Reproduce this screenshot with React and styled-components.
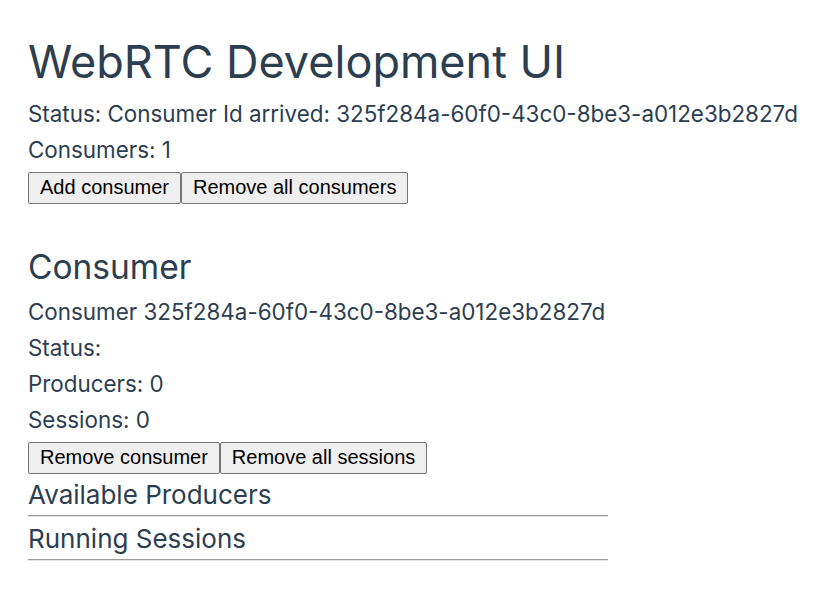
import React from 'react';
import styled, { createGlobalStyle } from 'styled-components';

const GlobalStyle = createGlobalStyle`
    body {
        margin: 0;
        background: #ffffff;
        font-family: Inter, "Noto Sans", sans-serif;
        color: #2c3e50;
    }
`;

const Page = styled.div`
    display: flex;
    flex-direction: column;
    padding: 28px 28px 0 28px;
`;

const Title = styled.h1`
    margin: 0;
    font-size: 45px;
    font-weight: 400;
    line-height: 68px;
`;

const Line = styled.p`
    margin: 0;
    font-size: 22.4px;
    line-height: 36px;
`;

const ButtonRow = styled.div`
    display: flex;
    margin-top: 4px;
`;

const Button = styled.button`
    font-family: "Liberation Sans", Arial, sans-serif;
    font-size: 20px;
    color: #000;
    background: #efefef;
    border: 1px solid #767676;
    border-radius: 2px;
    padding: 0 11px 1px;
    height: 32px;
`;

const Section = styled.section`
    display: flex;
    flex-direction: column;
    margin-top: 36px;
    width: 580px;
`;

const SectionTitle = styled.h2`
    margin: 0;
    font-size: 33.5px;
    font-weight: 400;
    line-height: 54px;
`;

const Panel = styled.div`
    border-bottom: 1px solid #9a9a9a;
    box-shadow: 0 1px 0 #e4e4e4;
    margin-bottom: 2px;
`;

const PanelTitle = styled.h3`
    margin: 0;
    font-size: 26px;
    font-weight: 400;
    line-height: 41px;
`;

const consumerId = '325f284a-60f0-43c0-8be3-a012e3b2827d';

export default function App() {
    return (
        <>
            <GlobalStyle />
            <Page>
                <Title>WebRTC Development UI</Title>
                <Line>Status: Consumer Id arrived: {consumerId}</Line>
                <Line>Consumers: 1</Line>
                <ButtonRow>
                    <Button>Add consumer</Button>
                    <Button>Remove all consumers</Button>
                </ButtonRow>
                <Section>
                    <SectionTitle>Consumer</SectionTitle>
                    <Line>Consumer {consumerId}</Line>
                    <Line>Status:</Line>
                    <Line>Producers: 0</Line>
                    <Line>Sessions: 0</Line>
                    <ButtonRow>
                        <Button>Remove consumer</Button>
                        <Button>Remove all sessions</Button>
                    </ButtonRow>
                    <Panel>
                        <PanelTitle>Available Producers</PanelTitle>
                    </Panel>
                    <Panel>
                        <PanelTitle>Running Sessions</PanelTitle>
                    </Panel>
                </Section>
            </Page>
        </>
    );
}
